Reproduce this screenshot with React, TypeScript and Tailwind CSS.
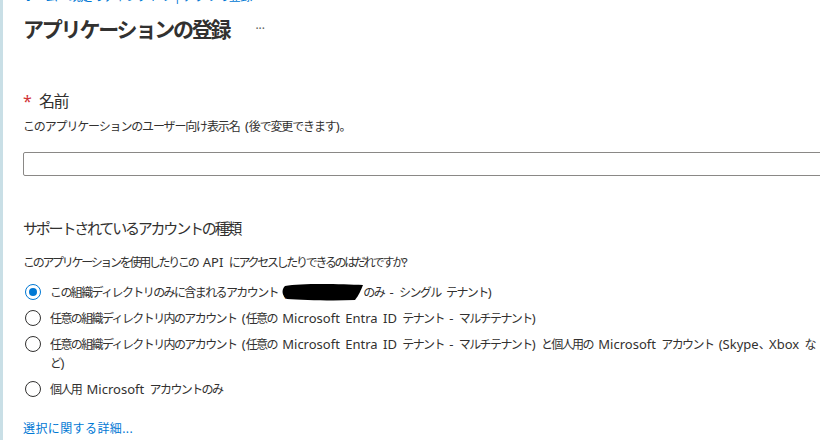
import React from "react";

const FONT = "font-['Noto_Sans','Noto_Sans_CJK_JP',sans-serif]";

// Latin runs (and the spaces/brackets round them) are set a size up
// and without the squeeze the kana get
function L({ children }: { children: React.ReactNode }) {
  return <span className="whitespace-pre text-[13px] tracking-normal [word-spacing:2px]">{children}</span>;
}

function Radio({ checked }: { checked?: boolean }) {
  return (
    <span
      className={`mt-[1px] flex h-4 w-4 shrink-0 items-center justify-center rounded-full border bg-white ${
        checked ? "border-[#0078d4]" : "border-[#323130]"
      }`}
    >
      {checked ? <span className="h-2 w-2 rounded-full bg-[#0078d4]" /> : null}
    </span>
  );
}

function Redacted() {
  return (
    <svg width="84" height="18" viewBox="0 0 84 18" className="-ml-[6px] -mr-[2px] inline-block align-[-4px]">
      <path d="M4 3 C20 0 60 1 82 2 C80 7 78 12 74 17 C50 18 22 17 6 16 C1 13 0 7 4 3 Z" fill="#000" />
    </svg>
  );
}

const OPTIONS = [
  {
    checked: true,
    lines: [
      <>
        この組織ディレクトリのみに含まれるアカウント<L> (</L>
        <Redacted />
        のみ<L> - </L>シングル<L> </L>テナント<L>)</L>
      </>,
    ],
  },
  {
    lines: [
      <>
        任意の組織ディレクトリ内のアカウント<L> (</L>任意の<L> Microsoft Entra ID </L>テナント<L> - </L>
        マルチテナント<L>)</L>
      </>,
    ],
  },
  {
    lines: [
      <>
        任意の組織ディレクトリ内のアカウント<L> (</L>任意の<L> Microsoft Entra ID </L>テナント<L> - </L>
        マルチテナント<L>) </L>と個人用の<L> Microsoft </L>アカウント<L> (Skype</L>、<L>Xbox </L>な
      </>,
      <>
        ど<L>)</L>
      </>,
    ],
  },
  {
    lines: [
      <>
        個人用<L> Microsoft </L>アカウントのみ
      </>,
    ],
  },
];

export default function App() {
  return (
    <div className={`flex h-[440px] w-[820px] overflow-hidden bg-white text-[#323130] ${FONT}`}>
      <div className="w-[3px] shrink-0 bg-[#c9dfe6]" />
      <div className="min-w-0 flex-1 pl-[20px]">
        <p className="-mt-[11px] h-[16px] whitespace-nowrap text-[12px] leading-[16px] tracking-[-0.5px] text-[#0078d4]">
          ホーム &gt; 既定のディレクトリ | アプリの登録 &gt;
        </p>

        <div className="mt-[10px] flex items-center">
          <h1 className="text-[21px] font-bold leading-[28px] tracking-[-2.2px]">アプリケーションの登録</h1>
          <span className="ml-[26px] text-[12px] leading-[28px] text-[#605e5c]">···</span>
        </div>

        <div className="mt-[47px] flex items-center text-[16px] leading-[22px]">
          <span className="w-[16px] text-[#d13438]">*</span>
          <span className="tracking-[-1.5px]">名前</span>
        </div>
        <p className="mt-[6px] whitespace-nowrap text-[12px] leading-[16px] tracking-[-1.15px]">
          このアプリケーションのユーザー向け表示名<L> (</L>後で変更できます<L>)</L>。
        </p>

        <input
          type="text"
          className="mt-[17px] block h-[24px] w-[820px] rounded-[2px] border border-[#8a8886] bg-white px-2 text-[13px] outline-none"
        />

        <h2 className="mt-[42px] whitespace-nowrap text-[15px] leading-[20px] tracking-[-2.2px]">
          サポートされているアカウントの種類
        </h2>
        <p className="mt-[16px] whitespace-nowrap text-[12px] leading-[16px] tracking-[-2.3px]">
          このアプリケーションを使用したりこの<L> API </L>にアクセスしたりできるのはだれですか<L>?</L>
        </p>

        <div className="mt-[12px] flex flex-col gap-[7px]">
          {OPTIONS.map((opt, i) => (
            <label key={i} className="flex items-start pl-[2px]">
              <Radio checked={opt.checked} />
              <span className="ml-[9px] text-[12px] leading-[18px] tracking-[-1.6px]">
                {opt.lines.map((line, j) => (
                  <span key={j} className="block whitespace-nowrap">
                    {line}
                  </span>
                ))}
              </span>
            </label>
          ))}
        </div>

        <a href="#" className="mt-[22px] block text-[12px] leading-[16px] tracking-[0.4px] text-[#0078d4]">
          選択に関する詳細...
        </a>
      </div>
    </div>
  );
}
